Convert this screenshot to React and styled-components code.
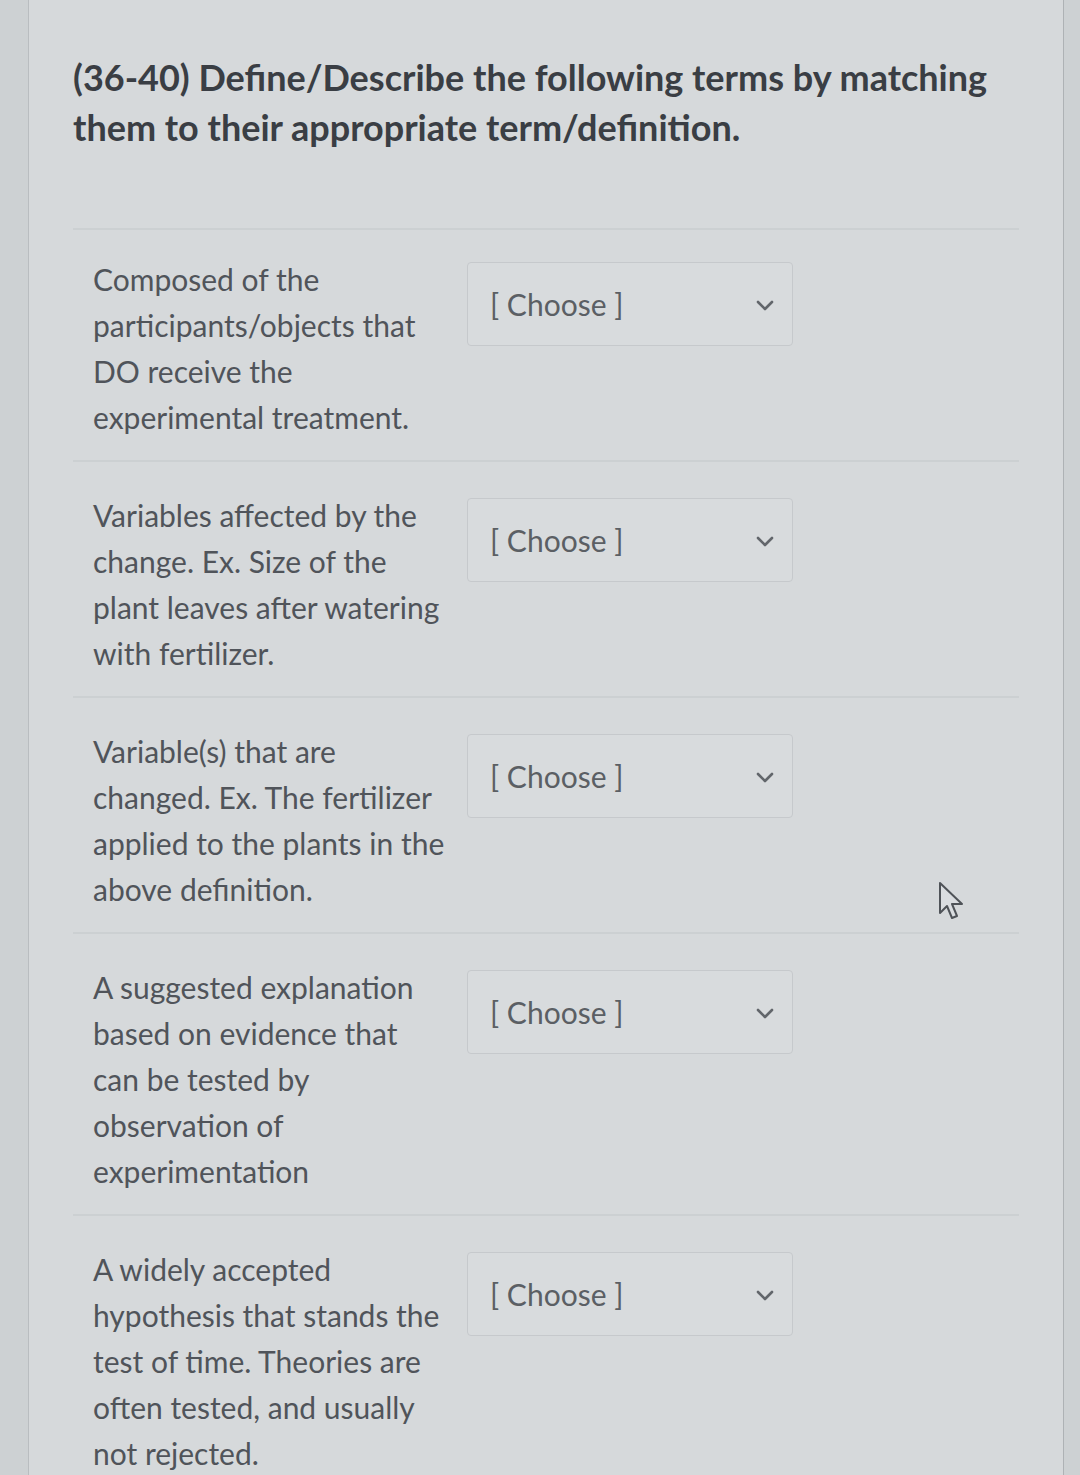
import React from "react";
import styled, { createGlobalStyle } from "styled-components";

const Global = createGlobalStyle`
  html, body { margin: 0; padding: 0; }
  body {
    background: #cdd1d3;
    font-family: Lato, "Noto Sans", "Liberation Sans", sans-serif;
    width: 1080px;
    min-height: 1475px;
  }
`;

const Page = styled.div`
  display: flex;
  padding-left: 28px;
  padding-right: 16px;
  min-height: 1475px;
  box-sizing: border-box;
`;

const Card = styled.div`
  position: relative;
  flex: 1;
  background: #d6d9db;
  border-left: 1px solid #b9bdc0;
  border-right: 1px solid #aeb2b5;
  padding: 52px 44px 40px 44px;
  box-sizing: border-box;
`;

const Title = styled.h2`
  margin: 0 0 76px 0;
  font-family: Lato, "Noto Sans", "Liberation Sans", sans-serif;
  font-weight: 700;
  font-size: 36px;
  line-height: 50px;
  color: #3a3e44;
`;

const Rows = styled.div`
  display: flex;
  flex-direction: column;
`;

const Row = styled.div`
  display: flex;
  align-items: flex-start;
  gap: 8px;
  padding: ${(p) => (p.$first ? "26px" : "30px")} 22px 20px 20px;
  border-top: 2px solid #ccd0d2;
`;

const Label = styled.div`
  width: 366px;
  flex: none;
  font-size: 30px;
  line-height: 46px;
  color: #50545a;
  white-space: nowrap;
`;

const Select = styled.div`
  display: flex;
  align-items: center;
  justify-content: space-between;
  width: 326px;
  height: 84px;
  margin-top: 6px;
  box-sizing: border-box;
  padding: 0 18px 0 22px;
  border: 1px solid #c6c9cc;
  border-radius: 4px;
  background: #d8dbdd;
  font-size: 30px;
  color: #5b5f64;
`;

const Chevron = styled.svg`
  width: 18px;
  height: 12px;
  margin-top: 4px;
`;

const Cursor = styled.svg`
  position: absolute;
  left: 908px;
  top: 880px;
  width: 30px;
  height: 44px;
`;

const items = [
  ["Composed of the", "participants/objects that", "DO receive the", "experimental treatment."],
  ["Variables affected by the", "change. Ex. Size of the", "plant leaves after watering", "with fertilizer."],
  ["Variable(s) that are", "changed. Ex. The fertilizer", "applied to the plants in the", "above definition."],
  ["A suggested explanation", "based on evidence that", "can be tested by", "observation of", "experimentation"],
  ["A widely accepted", "hypothesis that stands the", "test of time. Theories are", "often tested, and usually", "not rejected."],
];

export default function App() {
  return (
    <>
      <Global />
      <Page>
        <Card>
          <Title>
            (36-40) Define/Describe the following terms by matching
            <br />
            them to their appropriate term/definition.
          </Title>
          <Rows>
            {items.map((lines, i) => (
              <Row key={i} $first={i === 0}>
                <Label>
                  {lines.map((l, j) => (
                    <div key={j}>{l}</div>
                  ))}
                </Label>
                <Select>
                  <span>[ Choose ]</span>
                  <Chevron viewBox="0 0 18 12">
                    <path d="M2 2 L9 9 L16 2" fill="none" stroke="#62666b" strokeWidth="2.6" strokeLinecap="round" strokeLinejoin="round" />
                  </Chevron>
                </Select>
              </Row>
            ))}
          </Rows>
          <Cursor viewBox="0 0 30 44">
            <path
              d="M3 3 L3 33 L10 26 L15 38 L20 36 L15 24 L25 24 Z"
              fill="#dadde0"
              stroke="#4f5358"
              strokeWidth="2"
              strokeLinejoin="round"
            />
          </Cursor>
        </Card>
      </Page>
    </>
  );
}
